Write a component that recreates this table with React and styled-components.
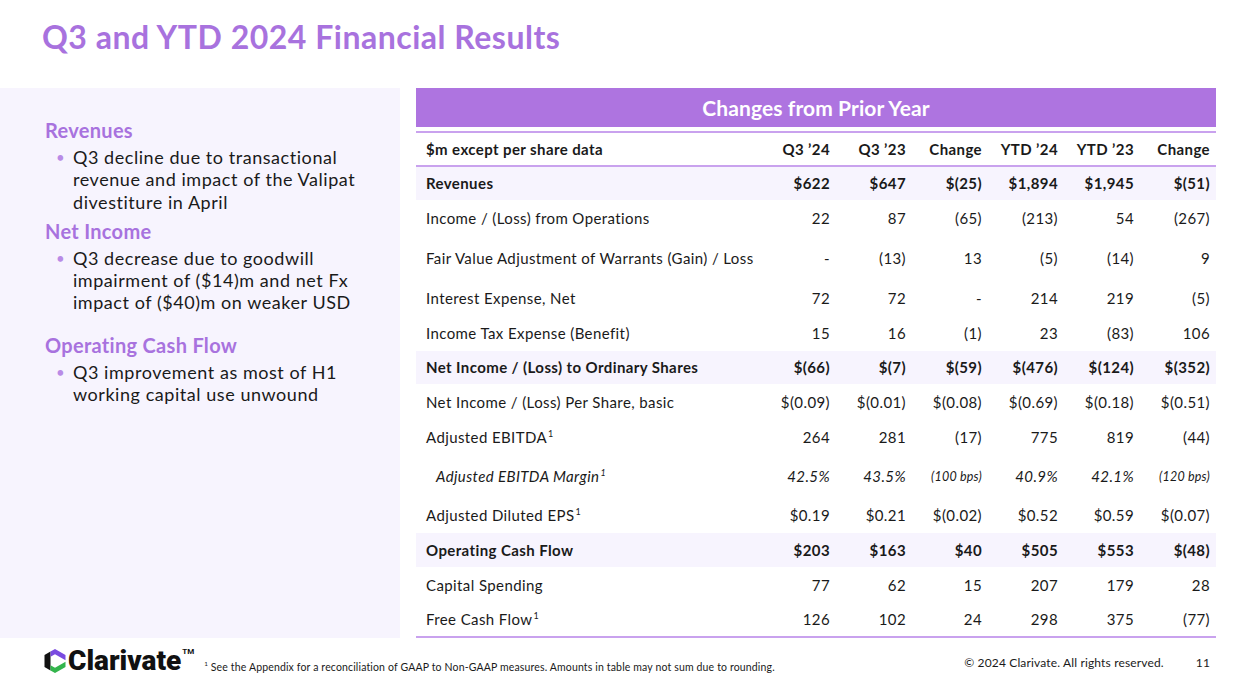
import React from 'react'
import styled, { createGlobalStyle } from 'styled-components'

const GlobalStyle = createGlobalStyle`
  body {
    margin: 0;
    background: #ffffff;
    font-family: 'Lato', 'Noto Sans', sans-serif;
    color: #1a1a1a;
  }
`;

const Slide = styled.div`
  width: 1256px;
  height: 683px;
  display: flex;
  flex-direction: column;
  overflow: hidden;
`;

const Title = styled.h1`
  margin: 0;
  height: 88px;
  box-sizing: border-box;
  padding: 17px 0 0 42px;
  font-size: 32px;
  font-weight: 700;
  color: #a872de;
  letter-spacing: 0.5px;
`;

const Main = styled.div`
  display: flex;
  gap: 16px;
  height: 550px;
`;

const Panel = styled.aside`
  width: 400px;
  background: #f7f4fe;
  box-sizing: border-box;
  padding: 29px 10px 0 45px;
`;

const Heading = styled.h2`
  margin: ${p => p.$gap || 0}px 0 3px 0;
  font-size: 20px;
  font-weight: 700;
  color: #a872de;
  line-height: 26px;
  letter-spacing: 0.3px;
`;

const Bullets = styled.ul`
  margin: 0;
  padding: 0 0 0 28px;
  list-style: none;
`;

const Bullet = styled.li`
  position: relative;
  font-size: 18px;
  line-height: 22.3px;
  letter-spacing: 0.55px;
  color: #1a1a1a;
  &::before {
    content: '•';
    position: absolute;
    left: -17px;
    color: #b98be6;
    font-size: 15px;
  }
`;

const Table = styled.section`
  width: 800px;
  display: flex;
  flex-direction: column;
  letter-spacing: 0.4px;
`;

const Banner = styled.div`
  height: 39px;
  background: #ae74e0;
  color: #ffffff;
  font-size: 21px;
  font-weight: 700;
  display: flex;
  align-items: center;
  justify-content: center;
  letter-spacing: 0.1px;
`;

const Rule = styled.div`
  height: 2px;
  background: #c9a2ee;
  margin-top: ${p => p.$top || 0}px;
`;

const Row = styled.div`
  display: grid;
  grid-template-columns: 344px repeat(6, 76px);
  height: ${p => p.$h || 35}px;
  align-items: center;
  background: ${p => (p.$shade ? '#f7f4fe' : 'transparent')};
  font-size: 15px;
  font-weight: ${p => (p.$bold ? 700 : 400)};
  color: #1a1a1a;
`;

const Label = styled.div`
  padding-left: ${p => (p.$indent ? 20 : 10)}px;
  font-style: ${p => (p.$italic ? 'italic' : 'normal')};
  white-space: nowrap;
`;

const Cell = styled.div`
  text-align: right;
  padding-right: 6px;
  white-space: nowrap;
  font-style: ${p => (p.$italic ? 'italic' : 'normal')};
  font-size: ${p => (p.$small ? 12.5 : 15)}px;
  letter-spacing: ${p => (p.$small ? 0.2 : 0.4)}px;
  padding-top: ${p => (p.$small ? 2 : 0)}px;
`;

const Sup = styled.span`
  font-size: 0.6em;
  position: relative;
  top: -0.65em;
  margin-left: 1px;
  letter-spacing: 0;
`;

const Footer = styled.footer`
  flex: 1;
  display: flex;
  align-items: center;
  padding: 0 0 0 44px;
`;

const Logo = styled.div`
  display: flex;
  align-items: center;
  gap: 2px;
  font-family: 'Roboto', 'Liberation Sans', sans-serif;
  font-weight: 900;
  font-size: 28px;
  color: #111;
`;

const Tm = styled.span`
  font-size: 8px;
  font-weight: 700;
  align-self: flex-start;
  margin: 3px 0 0 -1px;
`;

const Note = styled.div`
  font-size: 10.5px;
  letter-spacing: 0.15px;
  color: #1a1a1a;
  margin: 12px 0 0 9px;
`;

const Copyright = styled.div`
  margin-left: auto;
  margin-top: 4px;
  display: flex;
  gap: 32px;
  font-size: 12px;
  letter-spacing: 0.15px;
  color: #1a1a1a;
  padding-right: 46px;
`;

const rows = [
  { label: 'Revenues', bold: true, shade: true, h: 34, v: ['$622', '$647', '$(25)', '$1,894', '$1,945', '$(51)'] },
  { label: 'Income / (Loss) from Operations', h: 36, v: ['22', '87', '(65)', '(213)', '54', '(267)'] },
  { label: 'Fair Value Adjustment of Warrants (Gain) / Loss', h: 44, v: ['-', '(13)', '13', '(5)', '(14)', '9'] },
  { label: 'Interest Expense, Net', h: 36, v: ['72', '72', '-', '214', '219', '(5)'] },
  { label: 'Income Tax Expense (Benefit)', h: 35, v: ['15', '16', '(1)', '23', '(83)', '106'] },
  { label: 'Net Income / (Loss) to Ordinary Shares', bold: true, shade: true, h: 34, v: ['$(66)', '$(7)', '$(59)', '$(476)', '$(124)', '$(352)'] },
  { label: 'Net Income / (Loss) Per Share, basic', h: 35, v: ['$(0.09)', '$(0.01)', '$(0.08)', '$(0.69)', '$(0.18)', '$(0.51)'] },
  { label: 'Adjusted EBITDA', sup: true, h: 35, v: ['264', '281', '(17)', '775', '819', '(44)'] },
  { label: 'Adjusted EBITDA Margin', sup: true, italic: true, h: 44, v: ['42.5%', '43.5%', '(100 bps)', '40.9%', '42.1%', '(120 bps)'] },
  { label: 'Adjusted Diluted EPS', sup: true, h: 35, v: ['$0.19', '$0.21', '$(0.02)', '$0.52', '$0.59', '$(0.07)'] },
  { label: 'Operating Cash Flow', bold: true, shade: true, h: 35, v: ['$203', '$163', '$40', '$505', '$553', '$(48)'] },
  { label: 'Capital Spending', h: 35, v: ['77', '62', '15', '207', '179', '28'] },
  { label: 'Free Cash Flow', sup: true, h: 34, v: ['126', '102', '24', '298', '375', '(77)'] },
];

const ClarivateMark = () => (
  <svg width="22" height="24" viewBox="0 0 22 24">
    <polygon points="0.5,6 6.5,2.6 6.5,21.4 0.5,18" fill="#111" />
    <polygon points="6.5,2.6 11,0 21.5,6 21.5,11.2 11,5.2 6.5,7.8" fill="#7a4be0" />
    <polygon points="6.5,21.4 11,24 21.5,18 21.5,12.8 11,18.8 6.5,16.2" fill="#33b54c" />
  </svg>
);

const App = () => (
  <>
    <GlobalStyle />
    <Slide>
      <Title>Q3 and YTD 2024 Financial Results</Title>
      <Main>
        <Panel>
          <Heading>Revenues</Heading>
          <Bullets>
            <Bullet>Q3 decline due to transactional revenue and impact of the Valipat divestiture in April</Bullet>
          </Bullets>
          <Heading $gap={5}>Net Income</Heading>
          <Bullets>
            <Bullet>Q3 decrease due to goodwill impairment of ($14)m and net Fx impact of ($40)m on weaker USD</Bullet>
          </Bullets>
          <Heading $gap={18}>Operating Cash Flow</Heading>
          <Bullets>
            <Bullet>Q3 improvement as most of H1 working capital use unwound</Bullet>
          </Bullets>
        </Panel>
        <Table>
          <Banner>Changes from Prior Year</Banner>
          <Rule $top={4} />
          <Row $bold $h={32}>
            <Label>$m except per share data</Label>
            <Cell>Q3 ’24</Cell>
            <Cell>Q3 ’23</Cell>
            <Cell>Change</Cell>
            <Cell>YTD ’24</Cell>
            <Cell>YTD ’23</Cell>
            <Cell>Change</Cell>
          </Row>
          <Rule />
          {rows.map(r => (
            <Row key={r.label} $bold={r.bold} $shade={r.shade} $h={r.h}>
              <Label $italic={r.italic} $indent={r.italic}>
                {r.label}
                {r.sup && <Sup>1</Sup>}
              </Label>
              {r.v.map((x, i) => (
                <Cell key={i} $italic={r.italic} $small={r.italic && i % 3 === 2}>{x}</Cell>
              ))}
            </Row>
          ))}
          <Rule />
        </Table>
      </Main>
      <Footer>
        <Logo>
          <ClarivateMark />
          Clarivate
          <Tm>TM</Tm>
        </Logo>
        <Note><Sup>1</Sup> See the Appendix for a reconciliation of GAAP to Non-GAAP measures. Amounts in table may not sum due to rounding.</Note>
        <Copyright>
          <span>© 2024 Clarivate. All rights reserved.</span>
          <span>11</span>
        </Copyright>
      </Footer>
    </Slide>
  </>
);

export default App
